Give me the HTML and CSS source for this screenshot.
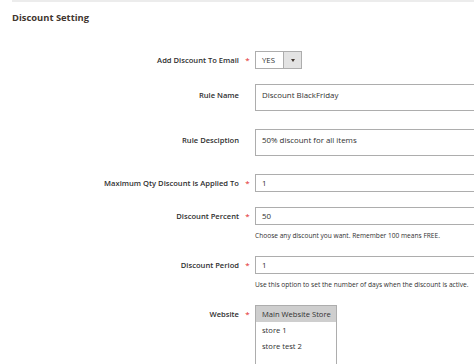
FILE: index.html
```html
<!DOCTYPE html>
<html lang="en">
<head>
    <meta charset="UTF-8">
    <meta name="viewport" content="width=device-width, initial-scale=1.0">
    <title>Discount Setting</title>
    <link rel="stylesheet" href="styles.css">
</head>
<body>
    <div class="section">
        <h2 class="section-title">Discount Setting</h2>

        <div class="form">
            <div class="field">
                <label class="field-label">Add Discount To Email</label>
                <span class="required">*</span>
                <div class="field-control">
                    <div class="select">
                        <span class="select-value">YES</span>
                        <span class="select-button"><span class="arrow"></span></span>
                    </div>
                </div>
            </div>

            <div class="field field-tall">
                <label class="field-label">Rule Name</label>
                <span class="required"></span>
                <div class="field-control">
                    <div class="textarea">Discount BlackFriday</div>
                </div>
            </div>

            <div class="field field-tall">
                <label class="field-label">Rule Desciption</label>
                <span class="required"></span>
                <div class="field-control">
                    <div class="textarea">50% discount for all items</div>
                </div>
            </div>

            <div class="field">
                <label class="field-label">Maximum Qty Discount is Applied To</label>
                <span class="required">*</span>
                <div class="field-control">
                    <div class="input">1</div>
                </div>
            </div>

            <div class="field">
                <label class="field-label">Discount Percent</label>
                <span class="required">*</span>
                <div class="field-control">
                    <div class="input">50</div>
                    <div class="note">Choose any discount you want. Remember 100 means FREE.</div>
                </div>
            </div>

            <div class="field">
                <label class="field-label">Discount Period</label>
                <span class="required">*</span>
                <div class="field-control">
                    <div class="input">1</div>
                    <div class="note">Use this option to set the number of days when the discount is active.</div>
                </div>
            </div>

            <div class="field">
                <label class="field-label">Website</label>
                <span class="required">*</span>
                <div class="field-control">
                    <div class="multiselect">
                        <div class="option selected">Main Website Store</div>
                        <div class="option">store 1</div>
                        <div class="option">store test 2</div>
                    </div>
                </div>
            </div>
        </div>
    </div>
</body>
</html>
```

FILE: styles.css
```css
:root {
    --text-color: #303030;
    --border-color: #adadad;
    --required-color: #e22626;
    --button-bg: #e3e3e3;
}

* {
    box-sizing: border-box;
    margin: 0;
    padding: 0;
}

body {
    font-family: 'Open Sans', 'Noto Sans', sans-serif;
    color: var(--text-color);
    background-color: #fff;
    width: 474px;
    height: 364px;
    overflow: hidden;
}

.section {
    margin-left: 12px;
    border-top: 2px solid #ececec;
}

.section-title {
    font-size: 9.4px;
    font-weight: 700;
    line-height: 14px;
    color: #41362f;
    margin-top: 9px;
}

.form {
    display: flex;
    flex-direction: column;
    gap: 15px;
    margin-top: 26px;
}

.field {
    display: grid;
    grid-template-columns: 227px 16px 240px;
    align-items: start;
}

.field-label {
    font-size: 7.6px;
    font-weight: 600;
    line-height: 18px;
    text-align: right;
}

.field-tall .field-label {
    padding-top: 2px;
}

.field-tall {
    margin-bottom: 3px;
}

.required {
    color: var(--required-color);
    font-size: 8px;
    line-height: 18px;
    text-align: center;
    padding-left: 1px;
}

.field-control {
    width: 240px;
}

.input,
.textarea {
    border: 1px solid var(--border-color);
    font-size: 7.9px;
    line-height: 11px;
    padding: 3px 6px;
    height: 18px;
}

.textarea {
    height: 27px;
    padding-top: 5px;
}

.note {
    font-size: 6.6px;
    line-height: 12px;
    margin-top: 5px;
    margin-bottom: -1px;
    white-space: nowrap;
}

.select {
    display: flex;
    width: 47px;
    height: 18px;
    border: 1px solid var(--border-color);
}

.select-value {
    flex: 1;
    font-size: 7.8px;
    line-height: 16px;
    padding-left: 6px;
}

.select-button {
    width: 18px;
    background-color: var(--button-bg);
    border-left: 1px solid var(--border-color);
    display: flex;
    align-items: center;
    justify-content: center;
}

.arrow {
    width: 0;
    height: 0;
    border-left: 2.5px solid transparent;
    border-right: 2.5px solid transparent;
    border-top: 3px solid #41362f;
}

.multiselect {
    width: 82px;
    height: 80px;
    border: 1px solid var(--border-color);
}

.option {
    font-size: 7.6px;
    line-height: 16px;
    padding-left: 6px;
}

.option.selected {
    background-color: #cecece;
}
```
